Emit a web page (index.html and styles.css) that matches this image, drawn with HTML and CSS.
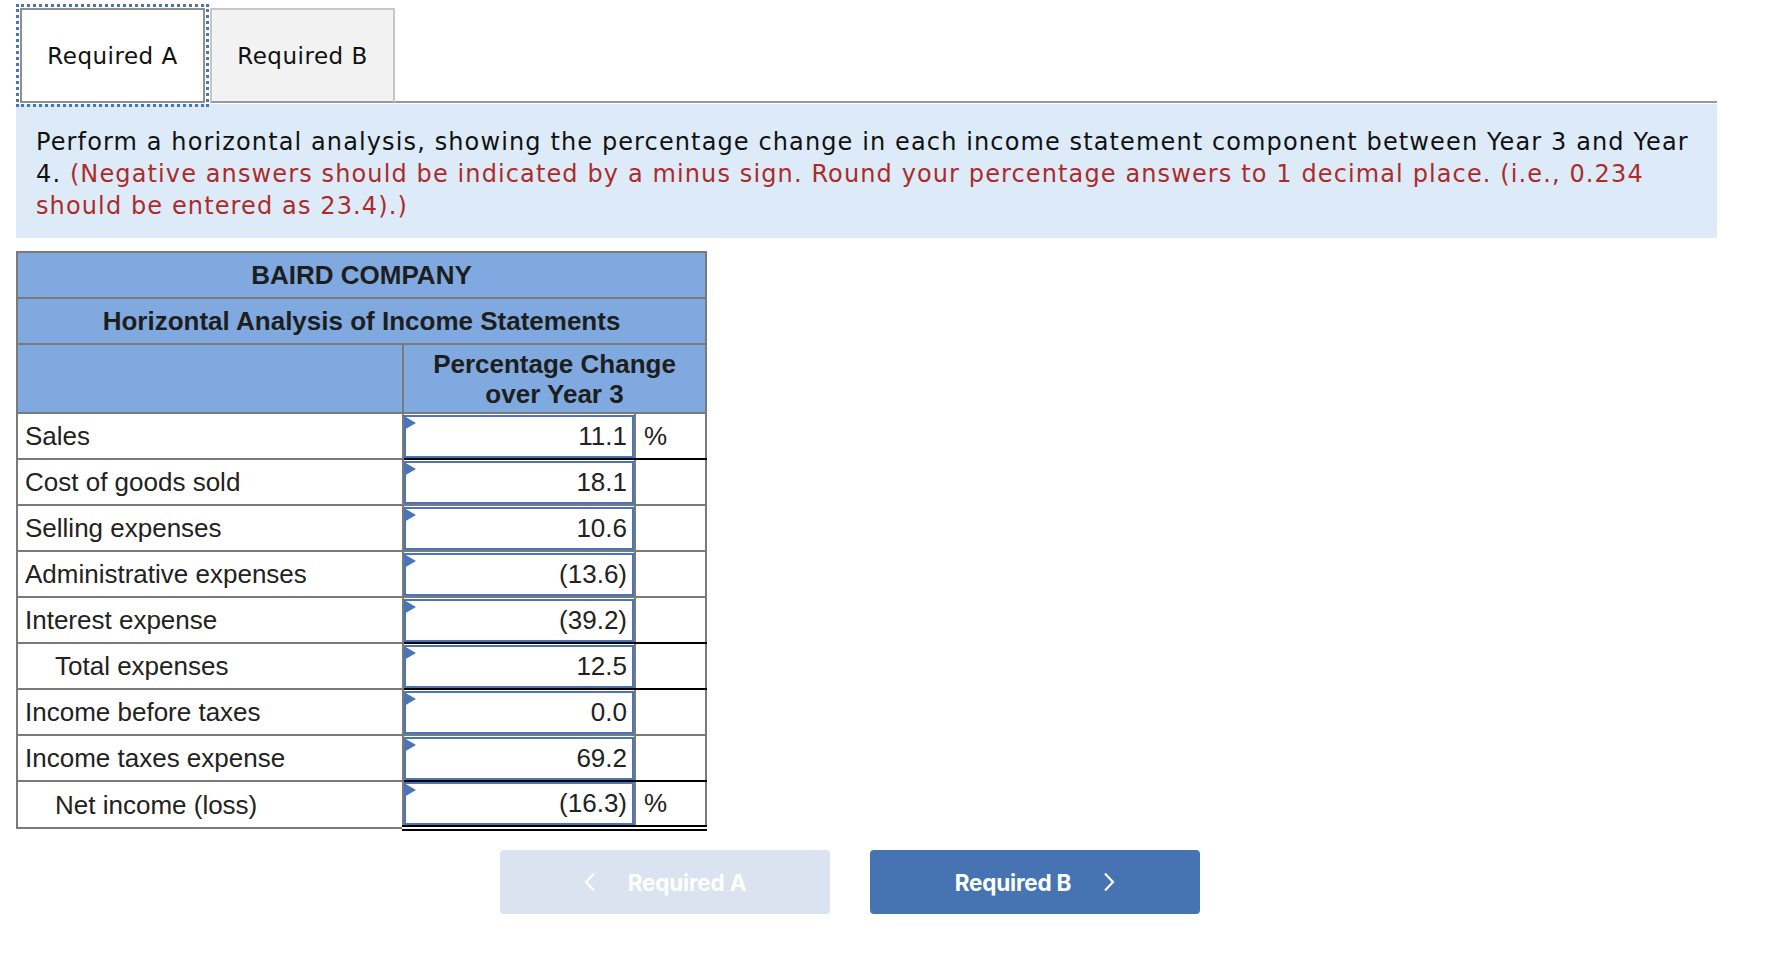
FILE: index.html
```html
<!DOCTYPE html>
<html>
<head>
<meta charset="utf-8">
<link rel="stylesheet" href="styles.css">
</head>
<body>
<div class="page">
  <div class="tabs">
    <div class="tab tab-active">Required A</div>
    <div class="tab tab-idle">Required B</div>
    <div class="tab-fill"></div>
  </div>
  <div class="prompt">
    <p>Perform a horizontal analysis, showing the percentage change in each income statement component between Year 3 and Year 4. <span class="hint">(Negative answers should be indicated by a minus sign. Round your percentage answers to 1 decimal place. (i.e., 0.234 should be entered as 23.4).)</span></p>
  </div>

  <table class="sheet">
    <colgroup>
      <col class="c-lbl">
      <col class="c-val">
      <col class="c-pct">
    </colgroup>
    <tr class="hrow"><th colspan="3">BAIRD COMPANY</th></tr>
    <tr class="hrow"><th colspan="3">Horizontal Analysis of Income Statements</th></tr>
    <tr class="hrow hrow-tall"><th class="hlabel"></th><th colspan="2">Percentage Change<br>over Year 3</th></tr>

    <tr class="ul"><td class="lbl">Sales</td><td class="val"><div class="inp"><span class="tri"></span>11.1</div></td><td class="pct">%</td></tr>
    <tr><td class="lbl">Cost of goods sold</td><td class="val"><div class="inp"><span class="tri"></span>18.1</div></td><td class="pct"></td></tr>
    <tr><td class="lbl">Selling expenses</td><td class="val"><div class="inp"><span class="tri"></span>10.6</div></td><td class="pct"></td></tr>
    <tr><td class="lbl">Administrative expenses</td><td class="val"><div class="inp"><span class="tri"></span>(13.6)</div></td><td class="pct"></td></tr>
    <tr class="ul"><td class="lbl">Interest expense</td><td class="val"><div class="inp"><span class="tri"></span>(39.2)</div></td><td class="pct"></td></tr>
    <tr class="ul"><td class="lbl ind">Total expenses</td><td class="val"><div class="inp"><span class="tri"></span>12.5</div></td><td class="pct"></td></tr>
    <tr><td class="lbl">Income before taxes</td><td class="val"><div class="inp"><span class="tri"></span>0.0</div></td><td class="pct"></td></tr>
    <tr class="ul"><td class="lbl">Income taxes expense</td><td class="val"><div class="inp"><span class="tri"></span>69.2</div></td><td class="pct"></td></tr>
    <tr class="dul"><td class="lbl ind">Net income (loss)</td><td class="val"><div class="inp"><span class="tri"></span>(16.3)</div></td><td class="pct">%</td></tr>
  </table>

  <div class="nav">
    <button class="btn btn-prev" type="button">
      <svg class="chev" width="12" height="20" viewBox="0 0 12 20"><polyline points="10,1.5 2,10 10,18.5" fill="none" stroke="#fff" stroke-width="2.2"/></svg>
      <span>Required A</span>
    </button>
    <button class="btn btn-next" type="button">
      <span>Required B</span>
      <svg class="chev" width="12" height="20" viewBox="0 0 12 20"><polyline points="2,1.5 10,10 2,18.5" fill="none" stroke="#fff" stroke-width="2.2"/></svg>
    </button>
  </div>
</div>
</body>
</html>
```

FILE: styles.css
```css
html, body {
  margin: 0;
  padding: 0;
  background: #fff;
}

.page {
  padding: 0 0 0 16px;
  width: 1701px;
}

.tabs {
  display: flex;
  align-items: flex-end;
  padding: 8px 0 0 4px;
}

.tab {
  box-sizing: border-box;
  width: 185px;
  height: 95px;
  display: flex;
  align-items: center;
  justify-content: center;
  font-family: "DejaVu Sans", Verdana, sans-serif;
  font-size: 23px;
  letter-spacing: 0.5px;
  color: #111;
  padding-top: 1px;
}

.tab-active {
  background: #fff;
  border: 2px solid #8e8e8e;
  outline: 3px dotted #4a76b8;
  outline-offset: 1px;
  margin-right: 5px;
}

.tab-idle {
  background: #f2f2f2;
  border: 2px solid #c6c6c6;
  border-bottom-color: #999;
}

.tab-fill {
  flex: 1;
  border-bottom: 2px solid #999;
}

.prompt {
  background: #ddebf8;
  padding: 22px 20px 16px 20px;
  margin-top: 1px;
}

.prompt p {
  margin: 0;
  font-family: "DejaVu Sans", Verdana, sans-serif;
  font-size: 24px;
  letter-spacing: 1.12px;
  line-height: 32px;
  color: #111;
}

.hint {
  color: #ab2b2b;
}

.sheet {
  margin-top: 13px;
  border-collapse: collapse;
  table-layout: fixed;
  width: 689px;
  font-family: "Liberation Sans", Arial, sans-serif;
  font-size: 26px;
  color: #222;
}

.c-lbl { width: 386px; }
.c-val { width: 232px; }
.c-pct { width: 71px; }

.sheet th, .sheet td {
  border: 2px solid #7a7a7a;
  padding: 0;
}

.hrow th {
  background: #80aadf;
  font-weight: bold;
  height: 44px;
  text-align: center;
  line-height: 30px;
  color: #1e1e1e;
}

.hrow-tall th {
  height: 67px;
}

.lbl {
  height: 44px;
  padding-left: 7px !important;
  white-space: nowrap;
  line-height: 30px;
}

.lbl.ind {
  padding-left: 37px !important;
}

.val {
  position: relative;
}

.pct {
  padding-left: 8px !important;
}

.inp {
  position: relative;
  box-sizing: border-box;
  height: 43px;
  border: 2px solid #4a76b8;
  background: #fff;
  text-align: right;
  padding-right: 5px;
  line-height: 39px;
}

.tri {
  position: absolute;
  left: -2px;
  top: -1px;
  width: 0;
  height: 0;
  border-left: 12px solid #4a76b8;
  border-top: 7px solid transparent;
  border-bottom: 7px solid transparent;
}

.ul .val, .ul .pct {
  border-bottom: 2px solid #000;
}

.dul .val, .dul .pct {
  border-bottom: 6px double #000;
}

.nav {
  display: flex;
  gap: 40px;
  margin-top: 19px;
  padding-left: 484px;
}

.btn {
  width: 330px;
  height: 64px;
  border: none;
  border-radius: 4px;
  display: flex;
  align-items: center;
  justify-content: center;
  gap: 32px;
  font-family: Inter, Roboto, sans-serif;
  font-weight: 700;
  font-size: 22.5px;
  letter-spacing: -0.2px;
  color: #fff;
  padding: 0;
}

.btn-prev {
  background: #dae3ef;
}

.btn-next {
  background: #4674b2;
}

.chev {
  display: block;
}
```
